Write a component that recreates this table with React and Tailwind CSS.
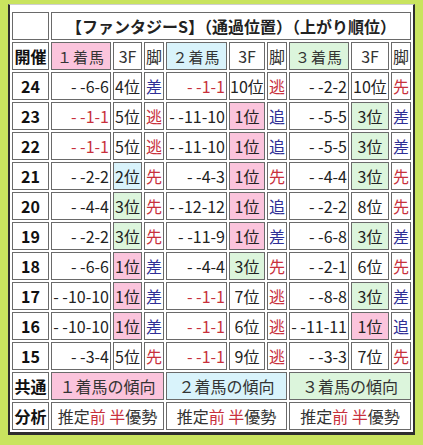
import clsx from "clsx";

const FONT = "font-['Noto_Sans_CJK_JP','Noto_Sans',sans-serif]";

const BG = {
  pink: "bg-[#fbc4dc]",
  blue: "bg-[#d9f3fb]",
  green: "bg-[#dcf5dc]",
};

// [pos, rank, rankBg, leg]
const ROWS = [
  ["24", ["- -6-6", "4位", null, "差"], ["- -1-1", "10位", null, "逃"], ["- -2-2", "10位", null, "先"]],
  ["23", ["- -1-1", "5位", null, "逃"], ["- -11-10", "1位", "pink", "追"], ["- -5-5", "3位", "green", "差"]],
  ["22", ["- -1-1", "5位", null, "逃"], ["- -11-10", "1位", "pink", "追"], ["- -5-5", "3位", "green", "差"]],
  ["21", ["- -2-2", "2位", "blue", "先"], ["- -4-3", "1位", "pink", "先"], ["- -4-4", "3位", "green", "先"]],
  ["20", ["- -4-4", "3位", "green", "先"], ["- -12-12", "1位", "pink", "追"], ["- -2-2", "8位", null, "先"]],
  ["19", ["- -2-2", "3位", "green", "先"], ["- -11-9", "1位", "pink", "差"], ["- -6-8", "3位", "green", "差"]],
  ["18", ["- -6-6", "1位", "pink", "差"], ["- -4-4", "3位", "green", "先"], ["- -2-1", "6位", null, "先"]],
  ["17", ["- -10-10", "1位", "pink", "差"], ["- -1-1", "7位", null, "逃"], ["- -8-8", "3位", "green", "差"]],
  ["16", ["- -10-10", "1位", "pink", "差"], ["- -1-1", "6位", null, "逃"], ["- -11-11", "1位", "pink", "追"]],
  ["15", ["- -3-4", "5位", null, "先"], ["- -1-1", "9位", null, "逃"], ["- -3-3", "7位", null, "先"]],
];

function Cell({ className, children }) {
  return (
    <div className={clsx("flex items-center border border-[#6a6a6a] leading-none whitespace-nowrap", className)}>
      {children}
    </div>
  );
}

function legColor(leg) {
  return leg === "逃" || leg === "先" ? "text-[#c8303c]" : "text-[#2f2f96]";
}

function Horse({ data }) {
  const [pos, rank, bg, leg] = data;
  return (
    <>
      <Cell className={clsx("justify-end pr-[1px] bg-white", pos === "- -1-1" ? "text-[#c8303c]" : "text-[#222]")}>
        {pos}
      </Cell>
      <Cell className={clsx("justify-center text-[#222]", bg ? BG[bg] : "bg-white")}>{rank}</Cell>
      <Cell className={clsx("justify-center bg-white", legColor(leg))}>{leg}</Cell>
    </>
  );
}

function Trend({ label, bg }) {
  return <Cell className={clsx("col-span-3 justify-center text-[#333]", bg)}>{label}</Cell>;
}

function Analysis() {
  return (
    <Cell className="col-span-3 justify-center bg-white text-[#333]">
      推定<span className="text-[#c8303c]">前 半</span>優勢
    </Cell>
  );
}

export default function App() {
  return (
    <div className={clsx("w-[423px] h-[445px] bg-[#c9e45f] pt-[4px] px-[8px] pb-[10px]", FONT)}>
      <div className="bg-white border-t border-t-[#cfcfcf] border-x-2 border-x-[#2e2e2e] border-b-[3px] border-b-[#2e2e2e] pt-[7px] px-[2px] pb-[2px]">
        <div className="grid grid-cols-[37px_60px_29px_20px_61px_36px_20px_60px_38px_20px] auto-rows-[28px] gap-[2px] text-[16px]">
          <Cell className="bg-white" />
          <Cell className="col-span-9 justify-center bg-white font-bold text-[16px] text-[#222]">
            【ファンタジーS】（通過位置）（上がり順位）
          </Cell>

          <Cell className="justify-center bg-white font-bold text-[16px] text-[#111]">開催</Cell>
          <Cell className={clsx("justify-center text-[#333] text-[15px] tracking-[1px]", BG.pink)}>１着馬</Cell>
          <Cell className="justify-center bg-white text-[#333]">3F</Cell>
          <Cell className="justify-center bg-white text-[#333]">脚</Cell>
          <Cell className={clsx("justify-center text-[#333] text-[15px] tracking-[1px]", BG.blue)}>２着馬</Cell>
          <Cell className="justify-center bg-white text-[#333]">3F</Cell>
          <Cell className="justify-center bg-white text-[#333]">脚</Cell>
          <Cell className={clsx("justify-center text-[#333] text-[15px] tracking-[1px]", BG.green)}>３着馬</Cell>
          <Cell className="justify-center bg-white text-[#333]">3F</Cell>
          <Cell className="justify-center bg-white text-[#333]">脚</Cell>

          {ROWS.map(([year, h1, h2, h3]) => (
            <div key={year} className="contents">
              <Cell className="justify-center bg-white font-bold text-[16px] text-[#111]">{year}</Cell>
              <Horse data={h1} />
              <Horse data={h2} />
              <Horse data={h3} />
            </div>
          ))}

          <Cell className="justify-center bg-white font-bold text-[16px] text-[#111]">共通</Cell>
          <Trend label="１着馬の傾向" bg={BG.pink} />
          <Trend label="２着馬の傾向" bg={BG.blue} />
          <Trend label="３着馬の傾向" bg={BG.green} />

          <Cell className="justify-center bg-white font-bold text-[16px] text-[#111]">分析</Cell>
          <Analysis />
          <Analysis />
          <Analysis />
        </div>
      </div>
    </div>
  );
}
